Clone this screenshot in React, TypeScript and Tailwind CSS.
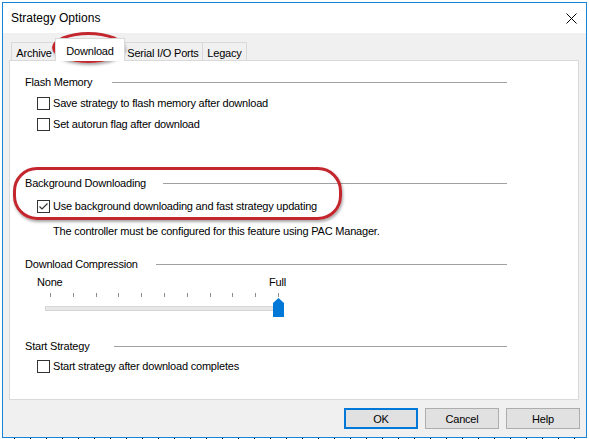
import React from "react"

const font = { fontFamily: '"Liberation Sans", Arial, sans-serif' }

function CheckBox({ checked = false }: { checked?: boolean }) {
  return (
    <span className="w-[13px] h-[13px] flex-none border border-[#333333] bg-white flex items-center justify-center">
      {checked && (
        <svg width="11" height="11" viewBox="0 0 11 11">
          <path d="M1.5 5.5 L4 8 L9.5 2.5" fill="none" stroke="#333333" strokeWidth="1.2" />
        </svg>
      )}
    </span>
  )
}

function CheckRow({ label, checked, className }: { label: string; checked?: boolean; className: string }) {
  return (
    <div className={"flex items-center h-4 ml-[12px] gap-[3px] " + className}>
      <CheckBox checked={checked} />
      <span className="leading-4">{label}</span>
    </div>
  )
}

// group header: caption followed by an etched rule running to x=507
function GroupHeader({ title, captionWidth, className }: { title: string; captionWidth: string; className: string }) {
  return (
    <div className={"flex items-center h-4 w-[482px] " + className}>
      <span className={"leading-4 whitespace-nowrap flex-none " + captionWidth}>{title}</span>
      <div className="flex-1 h-px bg-[#a0a0a0]" />
    </div>
  )
}

const tabs = ["Archive", "Download", "Serial I/O Ports", "Legacy"]
const tabWidths: Record<string, string> = {
  Archive: "w-[46px]",
  "Serial I/O Ports": "w-[80px]",
  Legacy: "w-[45px] -ml-px",
}

export default function App() {
  const ticks = Array.from({ length: 11 })
  const rulerTicks = Array.from({ length: 36 })

  return (
    <div
      className="w-[589px] h-[439px] bg-white relative overflow-hidden text-[11px] tracking-[-0.2px] text-black"
      style={font}
    >
      <div className="ml-[2px] mt-[2px] w-[585px] h-[436px] border border-[#1883d7] flex flex-col">
        {/* title bar */}
        <div className="h-[30px] bg-white flex items-center justify-between pl-[8px] pr-[9px]">
          <span className="text-[12px] tracking-normal">Strategy Options</span>
          <svg width="11" height="11" viewBox="0 0 11 11">
            <path d="M0.5 0.5 L10.5 10.5 M10.5 0.5 L0.5 10.5" stroke="#000" strokeWidth="1" />
          </svg>
        </div>

        {/* dialog body */}
        <div className="flex-1 bg-[#f0f0f0] pt-[9px] pl-[6px] pr-[7px] flex flex-col">
          <div className="flex items-end h-[18px] pl-[2px]">
            {tabs.map((t) =>
              t === "Download" ? (
                <div
                  key={t}
                  className="relative z-10 w-[70px] h-[23px] -mx-[2px] -mb-px bg-white border-l border-t border-r border-[#d9d9d9] flex justify-center pt-[4px] leading-4"
                >
                  {t}
                </div>
              ) : (
                <div
                  key={t}
                  className={
                    "h-[18px] border-l border-t border-r border-[#d9d9d9] flex justify-center pt-[2px] leading-4 " +
                    tabWidths[t]
                  }
                >
                  {t}
                </div>
              )
            )}
          </div>

          <div className="h-[340px] bg-white border border-[#d9d9d9] pl-[15px] flex flex-col">
            <GroupHeader title="Flash Memory" captionWidth="w-[87px]" className="mt-[13px]" />
            <CheckRow label="Save strategy to flash memory after download" className="mt-[5px]" />
            <CheckRow label="Set autorun flag after download" className="mt-[5px]" />

            <GroupHeader title="Background Downloading" captionWidth="w-[138px]" className="mt-[43px]" />
            <CheckRow label="Use background downloading and fast strategy updating" checked className="mt-[7px]" />
            <div className="ml-[28px] mt-[9px] h-4 leading-4">
              The controller must be configured for this feature using PAC Manager.
            </div>

            <GroupHeader title="Download Compression" captionWidth="w-[131px]" className="mt-[17px]" />
            <div className="ml-[12px] mt-[2px] h-4 w-[249px] flex justify-between leading-4">
              <span>None</span>
              <span>Full</span>
            </div>

            {/* compression trackbar */}
            <div className="relative ml-[20px] w-[240px] h-[28px]">
              <div className="ml-[5px] mt-[3px] w-[229px] h-[4px] flex justify-between">
                {ticks.map((_, i) => (
                  <div key={i} className="w-px h-full bg-[#8c8c8c]" />
                ))}
              </div>
              <div className="mt-[9px] w-[238px] h-[5px] bg-[#e7e7e7] border border-[#d6d6d6]" />
              <svg className="absolute left-[228px] top-[8px]" width="11" height="19" viewBox="0 0 11 19">
                <path d="M5.5 0 L11 5 L11 19 L0 19 L0 5 Z" fill="#0078d7" />
              </svg>
            </div>

            <GroupHeader title="Start Strategy" captionWidth="w-[89px]" className="mt-[20px]" />
            <CheckRow label="Start strategy after download completes" className="mt-[4px]" />
          </div>

          <div className="mt-[8px] -mr-px flex justify-end gap-[7px]">
            <button className="w-[74px] h-[21px] bg-[#e1e1e1] border-2 border-[#0078d7] leading-4">OK</button>
            <button className="w-[74px] h-[21px] bg-[#e1e1e1] border border-[#adadad] leading-4">Cancel</button>
            <button className="w-[74px] h-[21px] bg-[#e1e1e1] border border-[#adadad] leading-4">Help</button>
          </div>
        </div>
      </div>

      {/* ruler marks below the window */}
      <div className="flex pl-[14px] gap-[15px] h-[2px]">
        {rulerTicks.map((_, i) => (
          <div key={i} className="w-px h-full bg-black" />
        ))}
      </div>

      {/* red callouts */}
      <div className="absolute left-[52px] top-[32px] w-[73px] h-[31px] rounded-[50%] border-[3px] border-[#c4262e] shadow-[1px_2px_3px_rgba(0,0,0,0.35)]" />
      <div className="absolute left-[13px] top-[167px] w-[329px] h-[53px] rounded-[24px] border-[3px] border-[#c4262e] shadow-[1px_2px_3px_rgba(0,0,0,0.35)]" />
    </div>
  )
}
